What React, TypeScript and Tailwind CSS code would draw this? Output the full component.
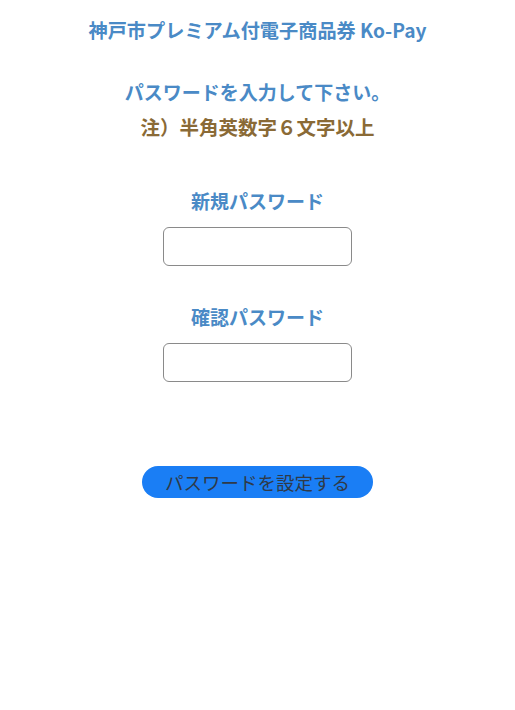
export default function App() {
    return (
        <div className="flex min-h-[710px] w-full flex-col items-center bg-white pt-[18px] font-['Noto_Sans_CJK_JP',sans-serif]">
            <h1 className="text-[19.2px] font-bold leading-[24px] text-[#4a8ac6]">
                神戸市プレミアム付電子商品券 Ko-Pay
            </h1>

            <p className="mt-[38px] text-[19px] font-bold leading-[24px] text-[#4a8ac6]">
                パスワードを入力して下さい。
            </p>
            <p className="mt-[11px] text-[19.5px] font-bold leading-[24px] text-[#8a6a36]">
                注）半角英数字６文字以上
            </p>

            <label className="mt-[50px] text-[19px] font-bold leading-[24px] text-[#4a8ac6]">
                新規パスワード
            </label>
            <input
                type="password"
                className="mt-[14px] h-[39px] w-[189px] rounded-[6px] border border-[#8a8a8a] bg-white px-2 outline-none"
            />

            <label className="mt-[39px] text-[19px] font-bold leading-[24px] text-[#4a8ac6]">
                確認パスワード
            </label>
            <input
                type="password"
                className="mt-[14px] h-[39px] w-[189px] rounded-[6px] border border-[#8a8a8a] bg-white px-2 outline-none"
            />

            <button
                type="button"
                className="mt-[84px] h-[32px] w-[231px] rounded-full bg-[#1a7ef5] text-[18.5px] leading-[32px] text-[#2f3a48]"
            >
                パスワードを設定する
            </button>
        </div>
    );
}
